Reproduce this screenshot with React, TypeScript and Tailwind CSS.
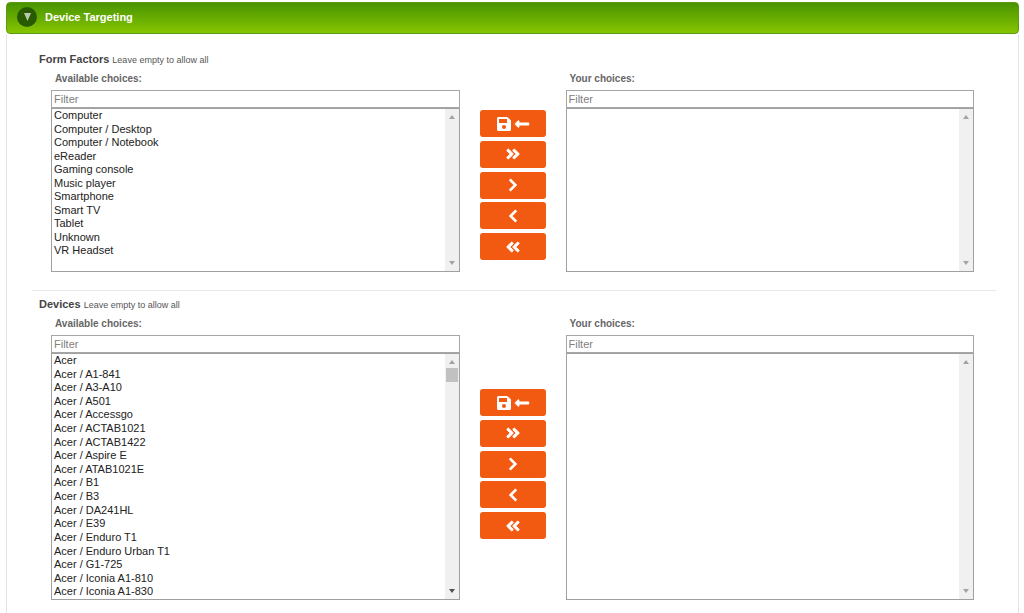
import { useState } from "react";
import {
  FaAngleDoubleLeft,
  FaAngleDoubleRight,
  FaChevronLeft,
  FaChevronRight,
  FaLongArrowAltLeft,
  FaSave,
} from "react-icons/fa";

const formFactors = [
  "Computer",
  "Computer / Desktop",
  "Computer / Notebook",
  "eReader",
  "Gaming console",
  "Music player",
  "Smartphone",
  "Smart TV",
  "Tablet",
  "Unknown",
  "VR Headset",
];

const devices = [
  "Acer",
  "Acer / A1-841",
  "Acer / A3-A10",
  "Acer / A501",
  "Acer / Accessgo",
  "Acer / ACTAB1021",
  "Acer / ACTAB1422",
  "Acer / Aspire E",
  "Acer / ATAB1021E",
  "Acer / B1",
  "Acer / B3",
  "Acer / DA241HL",
  "Acer / E39",
  "Acer / Enduro T1",
  "Acer / Enduro Urban T1",
  "Acer / G1-725",
  "Acer / Iconia A1-810",
  "Acer / Iconia A1-830",
];

type ScrollState = "none" | "top";

function ScrollTrack({ state }: { state: ScrollState }) {
  return (
    <div aria-hidden="true" className="flex w-3.5 shrink-0 flex-col items-center bg-[#f0f0f0] py-1.5">
      <svg width="6" height="4" viewBox="0 0 6 4" className="fill-[#a3a3a3]">
        <path d="M3 0 6 4H0z" />
      </svg>
      {state === "top" && <div className="mt-1 h-3.5 w-3 bg-[#c1c1c1]" />}
      <svg
        width="6"
        height="4"
        viewBox="0 0 6 4"
        className={state === "top" ? "mt-auto fill-[#505050]" : "mt-auto fill-[#a3a3a3]"}
      >
        <path d="M0 0H6L3 4z" />
      </svg>
    </div>
  );
}

interface ChoiceListProps {
  id: string;
  label: string;
  items: string[];
  heightClass: string;
  rowClass: string;
  scroll: ScrollState;
}

function ChoiceList({ id, label, items, heightClass, rowClass, scroll }: ChoiceListProps) {
  const [filter, setFilter] = useState("");
  const shown = items.filter((item) => item.toLowerCase().includes(filter.toLowerCase()));
  return (
    <div className="flex min-w-0 flex-col">
      <label htmlFor={id} className="mb-[5px] pl-1 text-[10px] leading-3 font-bold text-[#666]">
        {label}
      </label>
      <input
        type="text"
        placeholder="Filter"
        aria-label={`Filter ${label}`}
        value={filter}
        onChange={(e) => setFilter(e.target.value)}
        className="h-[18px] w-full border border-[#a6a6a6] bg-white px-0.5 pb-px text-[11px] text-[#222] outline-none placeholder:text-[#808080]"
      />
      {/* Rows are sized from the list's own height, so a whole number of them is always visible. */}
      <div className={`flex border border-[#a0a0a0] bg-white [container-type:size] ${heightClass}`}>
        <select
          id={id}
          multiple
          className="min-w-0 flex-1 appearance-none overflow-hidden bg-white text-[11px] text-[#222] outline-none"
        >
          {shown.map((item) => (
            <option key={item} className={`p-0 pl-0.5 ${rowClass}`}>
              {item}
            </option>
          ))}
        </select>
        <ScrollTrack state={scroll} />
      </div>
    </div>
  );
}

const actions = [
  {
    name: "Restore saved",
    icon: (
      <>
        <FaSave className="size-4" />
        <FaLongArrowAltLeft className="size-4 stroke-current stroke-[16]" />
      </>
    ),
  },
  { name: "Add all", icon: <FaAngleDoubleRight className="size-4 stroke-current stroke-[24]" /> },
  { name: "Add", icon: <FaChevronRight className="size-3.5 stroke-current stroke-[24]" /> },
  { name: "Remove", icon: <FaChevronLeft className="size-3.5 stroke-current stroke-[24]" /> },
  { name: "Remove all", icon: <FaAngleDoubleLeft className="size-4 stroke-current stroke-[24]" /> },
];

interface PickerProps {
  id: string;
  title: string;
  items: string[];
  heightClass: string;
  rowClass: string;
  offsetClass: string;
  scroll: ScrollState;
}

function Picker({ id, title, items, heightClass, rowClass, offsetClass, scroll }: PickerProps) {
  return (
    <section>
      <h2 className="mb-[5px] pl-[7px] text-[11px] leading-4 font-bold text-[#444]">
        {title} <small className="text-[9px] font-normal text-[#555]">Leave empty to allow all</small>
      </h2>
      <div className="grid grid-cols-[1fr_66px_1fr] gap-x-5 pr-[22px] pl-[19px]">
        <ChoiceList
          id={`${id}-available`}
          label="Available choices:"
          items={items}
          heightClass={heightClass}
          rowClass={rowClass}
          scroll={scroll}
        />
        <div className={offsetClass}>
          <div className="flex h-[150px] flex-col justify-between">
            {actions.map((action) => (
              <button
                key={action.name}
                type="button"
                aria-label={action.name}
                className="flex h-[27px] items-center justify-center gap-0.5 rounded-[3px] bg-[#f25a12] text-white"
              >
                {action.icon}
              </button>
            ))}
          </div>
        </div>
        <ChoiceList
          id={`${id}-chosen`}
          label="Your choices:"
          items={[]}
          heightClass={heightClass}
          rowClass={rowClass}
          scroll="none"
        />
      </div>
    </section>
  );
}

export default function App() {
  const [open, setOpen] = useState(true);
  return (
    <main className="flex min-h-screen flex-col bg-white pt-0.5 pr-[5px] pl-1.5 font-['Liberation_Sans',Arial,sans-serif]">
      <h1>
        <button
          type="button"
          aria-expanded={open}
          onClick={() => setOpen(!open)}
          className="flex h-8 w-full items-center gap-2 rounded-[4px] border border-[#5c9a14] bg-linear-to-b from-[#489400] to-[#86c500] px-2.5 pb-0.5 text-[11px] font-bold text-white"
        >
          <span className="flex size-5 items-center justify-center rounded-full bg-[#285a00]">
            <svg width="7" height="8" viewBox="0 0 7 8" className="fill-[#b9c7ae]">
              <path d="M0 0H7L3.5 8z" />
            </svg>
          </span>
          Device Targeting
        </button>
      </h1>
      {open && (
        <div className="flex-1 border-x border-[#e4e4e4] pt-[17px] pr-[22px] pb-3 pl-[25px]">
          <Picker
            id="form-factors"
            title="Form Factors"
            items={formFactors}
            heightClass="h-[164px]"
            rowClass="h-[calc(100cqh/12)]"
            offsetClass="pt-[37px]"
            scroll="none"
          />
          <hr className="mt-[18px] mb-[5px] border-[#e8e8e8]" />
          <Picker
            id="devices"
            title="Devices"
            items={devices}
            heightClass="h-[247px]"
            rowClass="h-[calc(100cqh/18)]"
            offsetClass="pt-[71px]"
            scroll="top"
          />
        </div>
      )}
    </main>
  );
}
